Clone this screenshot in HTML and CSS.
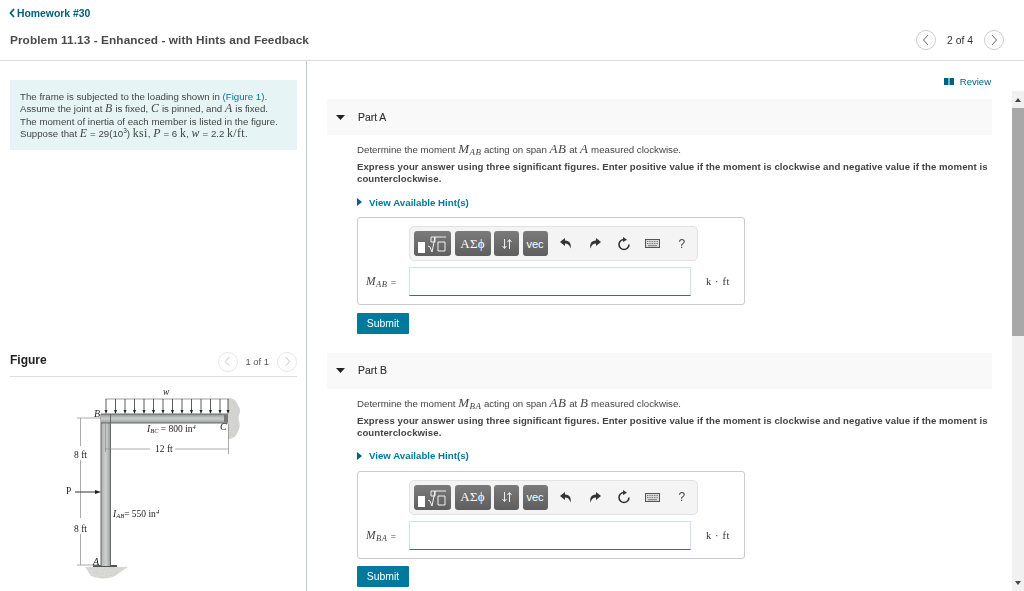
FILE: index.html
```html
<!DOCTYPE html>
<html lang="en">
<head>
<meta charset="utf-8">
<title>Problem 11.13</title>
<link rel="stylesheet" href="styles.css">
</head>
<body>
<div class="page">
  <header class="top">
    <a class="back"><svg class="back-chev" viewBox="0 0 6 10" width="6" height="10"><path d="M5 1 1.5 5 5 9" fill="none" stroke="#00607f" stroke-width="1.8"/></svg>Homework #30</a>
    <div class="title-row">
      <h1 class="title">Problem 11.13 - Enhanced - with Hints and Feedback</h1>
      <div class="pager">
        <span class="circle"><svg viewBox="0 0 8 12" width="8" height="12"><path d="M6 1 1.5 6 6 11" fill="none" stroke="#666" stroke-width="1"/></svg></span>
        <span class="pager-text">2 of 4</span>
        <span class="circle"><svg viewBox="0 0 8 12" width="8" height="12"><path d="M2 1 6.5 6 2 11" fill="none" stroke="#666" stroke-width="1"/></svg></span>
      </div>
    </div>
  </header>
  <main class="main">
    <aside class="left">
      <div class="intro">
        The frame is subjected to the loading shown in <a class="link">(Figure 1)</a>.<br>
        Assume the joint at <i class="m">B</i> is fixed, <i class="m">C</i> is pinned, and <i class="m">A</i> is fixed.<br>
        The moment of inertia of each member is listed in the figure.<br>
        Suppose that <i class="m">E</i> = 29(10<sup class="sup">3</sup>) <span class="m">ksi</span>, <i class="m">P</i> = 6 <span class="m">k</span>, <i class="m">w</i> = 2.2 <span class="m">k/ft</span>.
      </div>
      <div class="fig-head">
        <h2 class="fig-title">Figure</h2>
        <div class="fig-pager">
          <span class="circle faint"><svg viewBox="0 0 8 12" width="7" height="11"><path d="M6 1 1.5 6 6 11" fill="none" stroke="#bbb" stroke-width="1"/></svg></span>
          <span class="fig-count">1 of 1</span>
          <span class="circle faint"><svg viewBox="0 0 8 12" width="7" height="11"><path d="M2 1 6.5 6 2 11" fill="none" stroke="#bbb" stroke-width="1"/></svg></span>
        </div>
      </div>
      <svg class="diagram" viewBox="0 378 306 213" width="306" height="213">
        <defs>
          <linearGradient id="col" x1="0" x2="1" y1="0" y2="0"><stop offset="0" stop-color="#a9b0ad"/><stop offset=".5" stop-color="#cdd2cf"/><stop offset="1" stop-color="#8f9693"/></linearGradient>
          <linearGradient id="beam" x1="0" x2="0" y1="0" y2="1"><stop offset="0" stop-color="#8d9491"/><stop offset=".5" stop-color="#c9cecb"/><stop offset="1" stop-color="#9aa19e"/></linearGradient>
          <filter id="speckle" x="0" y="0" width="100%" height="100%">
            <feTurbulence type="fractalNoise" baseFrequency=".9" numOctaves="2" seed="4" result="n"/>
            <feColorMatrix in="n" type="matrix" values="0 0 0 0 .62  0 0 0 0 .62  0 0 0 0 .6  0 0 0 2.2 -.75" result="d"/>
            <feComposite in="d" in2="SourceGraphic" operator="in" result="s"/>
            <feMerge><feMergeNode in="SourceGraphic"/><feMergeNode in="s"/></feMerge>
          </filter>
        </defs>
        <path filter="url(#speckle)" d="M228 399c6 0 8 3 10 7s3 6 1 10 2 8 0 14-5 10-11 10z" fill="#d6d6d3"/>
        <path filter="url(#speckle)" d="M85 568h43c-5 3-9 6-13 9-7 3-15 3-21 1s-5-6-9-10z" fill="#dbdbd8"/>
        <path d="M93 567h24" stroke="#555" stroke-width="2"/>
        <rect x="101" y="415" width="10" height="152" fill="url(#col)"/>
        <path d="M101 415v152M110.500 415v152" stroke="#666" stroke-width="1"/>
        <rect x="101" y="415" width="127" height="9" fill="url(#beam)"/>
        <path d="M101 415h127M101 424h127M110.500 415v9" stroke="#666" stroke-width="1"/>
        <rect x="224" y="416" width="4" height="7" fill="#777"/>
        <path d="M105.500 400h123" stroke="#777" stroke-width=".7"/>
        <g stroke="#333" stroke-width=".8" fill="#222">
          <path d="M106 400v12M115.500 400v12M125 400v12M134.500 400v12M144 400v12M153.500 400v12M163 400v12M172.500 400v12M182 400v12M191.500 400v12M201 400v12M210.500 400v12M220 400v12M228 400v12"/>
          <path stroke="none" d="M104.500 411h3l-1.500 4zM114 411h3l-1.500 4zM123.500 411h3l-1.500 4zM133 411h3l-1.500 4zM142.500 411h3l-1.500 4zM152 411h3l-1.500 4zM161.500 411h3l-1.500 4zM171 411h3l-1.500 4zM180.500 411h3l-1.500 4zM190 411h3l-1.500 4zM199.500 411h3l-1.500 4zM209 411h3l-1.500 4zM218.500 411h3l-1.500 4zM226.500 411h3l-1.500 4z"/>
        </g>
        <path d="M77 419h24M77 566h20M80.500 419v28M80.500 461v58M80.500 535v31M105.500 425v28M228.500 425v30M105 450h45M175 450h53" stroke="#888" stroke-width=".7" fill="none"/>
        <path d="M75 493h21" stroke="#333" stroke-width="1"/>
        <path d="M95 491l6 2-6 2z" fill="#222"/>
        <text class="d-it" x="163" y="396">w</text>
        <text class="d-it d-b" x="94" y="418">B</text>
        <text class="d-it d-b" x="220" y="431">C</text>
        <text class="d-it d-b" x="93" y="566">A</text>
        <text class="d-t" x="147" y="433"><tspan class="d-i">I</tspan><tspan class="d-s" dy="1">BC</tspan><tspan dy="-1"> = 800 in</tspan><tspan class="d-s" dy="-3">4</tspan></text>
        <text class="d-t" x="155" y="453">12 ft</text>
        <text class="d-t" x="74" y="459">8 ft</text>
        <text class="d-t" x="74" y="533">8 ft</text>
        <text class="d-t" x="66" y="495">P</text>
        <text class="d-t" x="113" y="518"><tspan class="d-i">I</tspan><tspan class="d-s" dy="1">AB</tspan><tspan dy="-1">= 550 in</tspan><tspan class="d-s" dy="-3">4</tspan></text>
      </svg>
    </aside>
    <section class="right">
      <div class="review-row"><a class="review"><svg viewBox="0 0 10 7" width="10" height="7"><path d="M0 0h4.500v7H0zM5.500 0H10v7H5.500z" fill="#00607f"/></svg>Review</a></div>
      <div class="scroll-wrap">
        <div class="parts">
          <article class="part">
            <div class="part-head"><svg class="caret" viewBox="0 0 9 5" width="9" height="5"><path d="M0 0h9L4.500 5z" fill="#222"/></svg><span class="part-name">Part A</span></div>
            <div class="part-body">
              <p class="q">Determine the moment <i class="m big">M</i><sub class="sub m"><i>AB</i></sub> acting on span <i class="m big">AB</i> at <i class="m big">A</i> measured clockwise.</p>
              <p class="express">Express your answer using three significant figures. Enter positive value if the moment is clockwise and negative value if the moment is counterclockwise.</p>
              <a class="hint"><svg viewBox="0 0 5 8" width="5" height="8"><path d="M0 0l5 4-5 4z" fill="#00607f"/></svg>View Available Hint(s)</a>
              <div class="answer">
                <div class="toolbar">
                  <span class="tb tb1"><span class="blk"></span><span class="root"><svg viewBox="0 0 19 17" width="19" height="17"><path d="M3 1h4v5H3zM0 10l2 1 2 5 3-15h11" fill="none" stroke="#fff" stroke-width=".9"/><path d="M10 6h7v9h-7z" fill="none" stroke="#fff" stroke-width=".9"/></svg></span></span>
                  <span class="tb tb2">ΑΣϕ</span>
                  <span class="tb tb3"><svg viewBox="0 0 12 12" width="12" height="12"><path d="M3.500 1v9M1.500 8l2 2.500 2-2.500M8.500 11V2M6.500 4l2-2.500 2 2.500" fill="none" stroke="#eee" stroke-width="1"/></svg></span>
                  <span class="tb tb4">vec</span>
                  <span class="ico ico-undo"><svg viewBox="0 0 12 11" width="12" height="11"><path d="M5 0 0 4l5 4V5.500c3 0 4.500 1.500 5.500 5 1-4-.5-8-5.500-8z" fill="#333"/></svg></span>
                  <span class="ico ico-redo"><svg viewBox="0 0 12 11" width="12" height="11"><path d="M7 0l5 4-5 4V5.500c-3 0-4.500 1.500-5.500 5-1-4 .5-8 5.500-8z" fill="#333"/></svg></span>
                  <span class="ico ico-reset"><svg viewBox="0 0 14 14" width="14" height="14"><path d="M7 2.500a5 5 0 1 0 5 5" fill="none" stroke="#333" stroke-width="1.600"/><path d="M6 0l4 2.700L6 5z" fill="#333"/></svg></span>
                  <span class="ico ico-kbd"><svg viewBox="0 0 15 9" width="15" height="9"><rect x=".5" y=".5" width="14" height="8" fill="#ddd" stroke="#555"/><path d="M2 2.500h11M2 4.500h11" stroke="#777" stroke-dasharray="1 .7"/><path d="M3 6.700h9" stroke="#777"/></svg></span>
                  <span class="ico ico-help">?</span>
                </div>
                <div class="input-row">
                  <span class="label m"><i>M</i><sub class="lsub"><i>AB</i></sub> <span class="eq">=</span></span>
                  <span class="input"></span>
                  <span class="unit m">k · ft</span>
                </div>
              </div>
              <button class="submit">Submit</button>
            </div>
          </article>
          <article class="part">
            <div class="part-head"><svg class="caret" viewBox="0 0 9 5" width="9" height="5"><path d="M0 0h9L4.500 5z" fill="#222"/></svg><span class="part-name">Part B</span></div>
            <div class="part-body">
              <p class="q">Determine the moment <i class="m big">M</i><sub class="sub m"><i>BA</i></sub> acting on span <i class="m big">AB</i> at <i class="m big">B</i> measured clockwise.</p>
              <p class="express">Express your answer using three significant figures. Enter positive value if the moment is clockwise and negative value if the moment is counterclockwise.</p>
              <a class="hint"><svg viewBox="0 0 5 8" width="5" height="8"><path d="M0 0l5 4-5 4z" fill="#00607f"/></svg>View Available Hint(s)</a>
              <div class="answer">
                <div class="toolbar">
                  <span class="tb tb1"><span class="blk"></span><span class="root"><svg viewBox="0 0 19 17" width="19" height="17"><path d="M3 1h4v5H3zM0 10l2 1 2 5 3-15h11" fill="none" stroke="#fff" stroke-width=".9"/><path d="M10 6h7v9h-7z" fill="none" stroke="#fff" stroke-width=".9"/></svg></span></span>
                  <span class="tb tb2">ΑΣϕ</span>
                  <span class="tb tb3"><svg viewBox="0 0 12 12" width="12" height="12"><path d="M3.500 1v9M1.500 8l2 2.500 2-2.500M8.500 11V2M6.500 4l2-2.500 2 2.500" fill="none" stroke="#eee" stroke-width="1"/></svg></span>
                  <span class="tb tb4">vec</span>
                  <span class="ico ico-undo"><svg viewBox="0 0 12 11" width="12" height="11"><path d="M5 0 0 4l5 4V5.500c3 0 4.500 1.500 5.500 5 1-4-.5-8-5.500-8z" fill="#333"/></svg></span>
                  <span class="ico ico-redo"><svg viewBox="0 0 12 11" width="12" height="11"><path d="M7 0l5 4-5 4V5.500c-3 0-4.500 1.500-5.500 5-1-4 .5-8 5.500-8z" fill="#333"/></svg></span>
                  <span class="ico ico-reset"><svg viewBox="0 0 14 14" width="14" height="14"><path d="M7 2.500a5 5 0 1 0 5 5" fill="none" stroke="#333" stroke-width="1.600"/><path d="M6 0l4 2.700L6 5z" fill="#333"/></svg></span>
                  <span class="ico ico-kbd"><svg viewBox="0 0 15 9" width="15" height="9"><rect x=".5" y=".5" width="14" height="8" fill="#ddd" stroke="#555"/><path d="M2 2.500h11M2 4.500h11" stroke="#777" stroke-dasharray="1 .7"/><path d="M3 6.700h9" stroke="#777"/></svg></span>
                  <span class="ico ico-help">?</span>
                </div>
                <div class="input-row">
                  <span class="label m"><i>M</i><sub class="lsub"><i>BA</i></sub> <span class="eq">=</span></span>
                  <span class="input"></span>
                  <span class="unit m">k · ft</span>
                </div>
              </div>
              <button class="submit">Submit</button>
            </div>
          </article>
        </div>
        <div class="scrollbar">
          <span class="sb-btn"><svg viewBox="0 0 6 4" width="6" height="4"><path d="M3 0l3 4H0z" fill="#444"/></svg></span>
          <span class="sb-thumb"></span>
          <span class="sb-btn sb-end"><svg viewBox="0 0 6 4" width="6" height="4"><path d="M0 0h6L3 4z" fill="#444"/></svg></span>
        </div>
      </div>
    </section>
  </main>
</div>
</body>
</html>
```
FILE: styles.css
```css
* { box-sizing: border-box; }
html, body { margin: 0; height: 100%; overflow: hidden; background: #fff; }
body { font-family: "Liberation Sans", Arial, sans-serif; color: #333; font-size: 9.5px; }
p, h1, h2 { margin: 0; }
.page { width: 1024px; height: 591px; display: flex; flex-direction: column; overflow: hidden; filter: blur(.25px); }

.top { height: 61px; flex: none; border-bottom: 1px solid #dcdfe1; padding: 7px 20px 0 9px; }
.back { display: flex; align-items: center; gap: 2px; color: #00607f; font-weight: bold; font-size: 10.4px; height: 12px; }
.back-chev { flex: none; }
.title-row { display: flex; justify-content: space-between; align-items: center; margin-top: 11px; height: 20px; padding-left: 1px; }
.title { font-size: 11.8px; font-weight: bold; color: #4a4a4a; letter-spacing: .08px; }
.pager { display: flex; align-items: center; gap: 11px; }
.pager-text { font-size: 10.4px; color: #333; }
.circle { width: 20px; height: 20px; border: 1px solid #ccc; border-radius: 50%; display: flex; align-items: center; justify-content: center; }
.circle.faint { border-color: #e6e6e6; }

.main { flex: 1; display: flex; min-height: 0; }
.left { width: 307px; flex: none; border-right: 1px solid #b9cbd9; padding: 19px 9px 0 10px; }
.intro { height: 70px; background: #e6f4f6; padding: 11px 10px 0; font-size: 9.7px; line-height: 12.3px; color: #444; white-space: nowrap; }
.intro .m { font-size: 11.8px; line-height: 0; letter-spacing: .4px; }
.link { color: #00789f; }
.m { font-family: "Liberation Serif", "Times New Roman", serif; }
.big { font-size: 13px; letter-spacing: .5px; }
.sup { font-size: 6.5px; line-height: 0; vertical-align: 4px; }

.fig-head { display: flex; justify-content: space-between; align-items: center; margin-top: 199px; height: 28px; padding-bottom: 6px; border-bottom: 1px solid #dcdfe1; }
.fig-title { font-size: 12px; font-weight: bold; color: #222; }
.fig-pager { display: flex; align-items: center; gap: 8px; margin-top: 4px; }
.fig-count { font-size: 9.4px; color: #555; }
.diagram { display: block; margin-left: -10px; }
.d-t, .d-it { font-family: "Liberation Serif", serif; font-size: 9.5px; fill: #222; }
.d-it { font-style: italic; }
.d-b { font-size: 10px; }
.d-i { font-style: italic; }
.d-s { font-size: 6.5px; font-style: italic; }

.right { flex: 1; min-width: 0; display: flex; flex-direction: column; }
.review-row { height: 30px; flex: none; display: flex; justify-content: flex-end; padding: 15px 33px 0 0; }
.review { display: flex; align-items: center; gap: 6px; height: 11px; color: #00607f; font-size: 9.5px; }
.scroll-wrap { flex: 1; min-height: 0; display: flex; overflow: hidden; }
.parts { flex: 1; min-width: 0; padding: 8px 20px 0 20px; }
.part { height: 253.5px; }
.part-head { height: 36px; background: #f9f9f9; display: flex; align-items: center; padding-left: 9px; }
.caret { flex: none; }
.part-name { margin-left: 13px; font-size: 10.4px; color: #333; -webkit-text-stroke: .15px #333; }
.part-body { padding: 7px 0 0 30px; }
.q { height: 13px; font-size: 9.7px; line-height: 13px; color: #444; white-space: nowrap; }
.sub { font-size: 9px; letter-spacing: .3px; line-height: 0; vertical-align: -2px; }
.express { margin-top: 6px; font-size: 9.6px; line-height: 12px; font-weight: bold; color: #444; letter-spacing: .07px; }
.hint { display: flex; align-items: center; gap: 7px; margin-top: 11px; height: 12px; font-size: 9.7px; font-weight: bold; color: #00789f; }
.answer { width: 388px; height: 88px; margin-top: 9px; border: 1px solid #ccc; border-radius: 3px; padding: 8px 0 0 51px; background: #fff; }
.toolbar { width: 289px; height: 35px; display: flex; align-items: center; background: #f4f4f4; border: 1px solid #e2e2e2; border-radius: 5px; padding-left: 4px; gap: 3.5px; }
.tb { height: 25px; flex: none; display: flex; align-items: center; justify-content: center; border-radius: 3px; background: linear-gradient(#7b7b7b, #5e5e5e); color: #fff; }
.tb1 { width: 37px; gap: 3px; align-items: flex-end; padding-bottom: 3px; }
.blk { width: 7px; height: 11px; background: #fff; }
.root { display: block; height: 17px; }
.tb2 { width: 36px; font-family: "Liberation Serif", "DejaVu Serif", serif; font-size: 13px; letter-spacing: .2px; }
.tb3 { width: 25px; }
.tb4 { width: 25px; font-size: 11px; }
.ico { width: 25.5px; display: flex; justify-content: center; align-items: center; color: #333; flex: none; }
.ico-undo { margin-left: 2px; }
.ico-help { font-size: 12px; color: #444; }
.input-row { display: flex; align-items: center; margin: 6px 0 0 -43px; height: 29px; }
.label { width: 43px; font-size: 11.5px; letter-spacing: .5px; color: #444; white-space: nowrap; line-height: 12px; }
.lsub { font-size: 8.5px; line-height: 0; vertical-align: -2px; }
.eq { font-family: "Liberation Sans", sans-serif; font-size: 9px; }
.input { width: 282px; height: 29px; border: 1px solid #cfe3ec; border-bottom: 1px solid #1a7a99; background: #fff; }
.unit { margin-left: 15px; font-size: 10.5px; letter-spacing: .6px; color: #333; }
.submit { display: block; margin-top: 7.9px; width: 52px; height: 21px; padding: 0; background: #007a9c; border: 0; border-radius: 1px; color: #fff; font: 10.4px "Liberation Sans", sans-serif; }
.scrollbar { flex: none; width: 12px; background: #f1f1f1; display: flex; flex-direction: column; }
.sb-btn { height: 17px; flex: none; display: flex; align-items: center; justify-content: center; }
.sb-thumb { height: 228px; flex: none; background: #a8a8a8; }
.sb-end { margin-top: auto; }
```
